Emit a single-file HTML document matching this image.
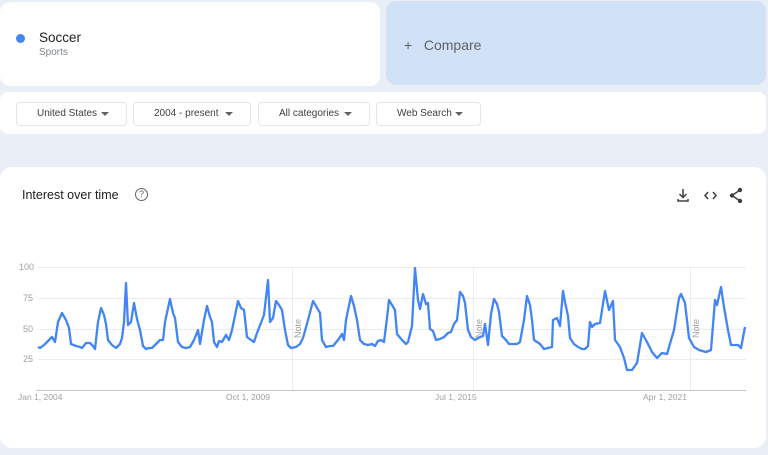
<!DOCTYPE html>
<html><head><meta charset="utf-8"><style>
*{margin:0;padding:0;box-sizing:border-box}
body{width:768px;height:455px;background:#eaeef7;font-family:"Liberation Sans",sans-serif;position:relative;overflow:hidden}
.card{position:absolute;background:#fff;border-radius:10px}
.dd{position:absolute;top:102px;height:24px;border:1px solid #e3e6ea;border-radius:4px;font-size:10px;color:#3c4043;line-height:22px;padding-left:20px}
.dd:after{content:"";position:absolute;right:17px;top:9px;border-left:4px solid transparent;border-right:4px solid transparent;border-top:4px solid #5f6368}
</style></head><body>
<div class="card" style="left:0;top:2px;width:380px;height:84px"></div>
<div style="position:absolute;left:16px;top:34px;width:9px;height:9px;border-radius:50%;background:#4285f4"></div>
<div style="position:absolute;left:39px;top:30px;font-size:13.5px;color:#202124">Soccer</div>
<div style="position:absolute;left:39px;top:47px;font-size:10px;color:#80868b">Sports</div>
<div style="position:absolute;left:386px;top:1px;width:380px;height:84px;background:#d2e2f6;border-radius:10px"></div>
<div style="position:absolute;left:404px;top:37px;font-size:14px;color:#5f6368">+&nbsp;&nbsp;&nbsp;Compare</div>
<div class="card" style="left:0;top:92px;width:766px;height:42px;border-radius:8px"></div>
<div class="dd" style="left:16px;width:111px">United States</div>
<div class="dd" style="left:133px;width:118px">2004 - present</div>
<div class="dd" style="left:258px;width:112px">All categories</div>
<div class="dd" style="left:376px;width:105px">Web Search</div>
<div class="card" style="left:0;top:167px;width:766px;height:281px;border-radius:12px"></div>
<div style="position:absolute;left:22px;top:188px;font-size:12.5px;color:#202124">Interest over time</div>
<div style="position:absolute;left:135px;top:188px;width:13px;height:13px;border:1.3px solid #5f6368;border-radius:50%;font-size:9px;color:#5f6368;text-align:center;line-height:11px">?</div>
<svg style="position:absolute;left:0;top:0" width="768" height="455">
<g stroke="#3c4043" stroke-width="1.5" fill="none">
<path d="M683 189v8M679.5 194l3.5 3.5 3.5-3.5M678 199v2h10v-2"/>
<path d="M708 192l-3 3.5 3 3.5M713 192l3 3.5-3 3.5"/>
<path d="M740 190L732 195.5L740 201"/>
</g>
<g fill="#3c4043"><circle cx="740" cy="190" r="2.2"/><circle cx="732" cy="195.5" r="2.2"/><circle cx="740" cy="201" r="2.2"/></g>
<g stroke="#ececec" stroke-width="1">
<line x1="38" y1="267.5" x2="746" y2="267.5"/><line x1="38" y1="298.5" x2="746" y2="298.5"/><line x1="38" y1="329.5" x2="746" y2="329.5"/><line x1="38" y1="359.5" x2="746" y2="359.5"/>
<line x1="292.5" y1="267" x2="292.5" y2="390"/><line x1="473.5" y1="267" x2="473.5" y2="390"/><line x1="690.5" y1="267" x2="690.5" y2="390"/>
</g>
<line x1="36" y1="390.5" x2="746" y2="390.5" stroke="#c6c6c6"/>
<g font-family="Liberation Sans" font-size="9" fill="#a0a0a0">
<text x="19" y="270">100</text><text x="23" y="301">75</text><text x="23" y="332">50</text><text x="23" y="362">25</text>
<text x="18" y="400" font-size="8.5">Jan 1, 2004</text><text x="226" y="400" font-size="8.5">Oct 1, 2009</text><text x="435" y="400" font-size="8.5">Jul 1, 2015</text><text x="643" y="400" font-size="8.5">Apr 1, 2021</text>
<text transform="translate(301,338) rotate(-90)" font-size="9">Note</text>
<text transform="translate(482,338) rotate(-90)" font-size="9">Note</text>
<text transform="translate(699,338) rotate(-90)" font-size="9">Note</text>
</g>
<polyline fill="none" stroke="#4285f4" stroke-width="2.3" stroke-linejoin="round" points="38,347 40,348 44,345 48,341 52,337 55,342 58,322 62,313 66,320 69,328 71,344 76,346 80,347 82,348 86,343 90,343 93,346 95,349 98,322 101,308 104,315 106,324 108,340 112,345 116,348 120,344 122,338 124,322 126,283 128,325 131,322 134,303 137,319 140,330 143,346 146,349 149,348 152,348 156,344 160,340 163,340 165,322 170,299 173,313 175,318 178,342 182,347 186,348 190,347 194,340 198,330 200,344 204,320 207,306 210,317 212,322 214,342 217,347 219,341 222,342 226,335 229,340 232,330 238,301 241,308 244,310 247,337 251,340 254,342 257,333 264,315 268,280 270,322 273,318 276,301 279,305 282,310 285,330 288,345 291,348 296,347 300,344 303,338 308,320 313,301 316,306 320,313 322,340 326,347 330,346 333,346 338,340 342,334 344,340 346,320 351,296 354,306 357,320 360,340 364,344 368,345 372,344 375,346 378,341 381,340 384,342 387,318 389,300 392,305 395,310 397,334 402,340 406,344 408,342 412,326 415,268 418,300 420,309 423,294 426,304 428,303 430,329 433,331 436,340 440,339 444,337 448,333 451,332 454,324 457,320 460,292 463,296 465,303 468,330 471,337 475,340 480,337 483,336 485,324 488,345 491,314 494,299 497,304 499,312 502,336 506,340 509,344 513,344 517,344 520,342 524,320 527,296 530,305 532,320 534,340 537,342 540,344 544,349 548,348 552,347 553,320 557,318 560,326 563,291 565,302 568,316 570,338 574,344 578,347 582,349 585,349 588,346 590,322 592,327 595,324 600,323 605,291 609,310 613,301 615,340 620,347 624,358 627,370 632,370 637,363 642,333 647,342 652,352 657,358 662,353 667,354 674,330 679,298 681,294 685,303 689,338 694,347 699,350 706,352 711,350 715,300 717,305 721,287 724,307 728,330 731,345 738,345 741,348 745,327"/>
</svg>
</body></html>
